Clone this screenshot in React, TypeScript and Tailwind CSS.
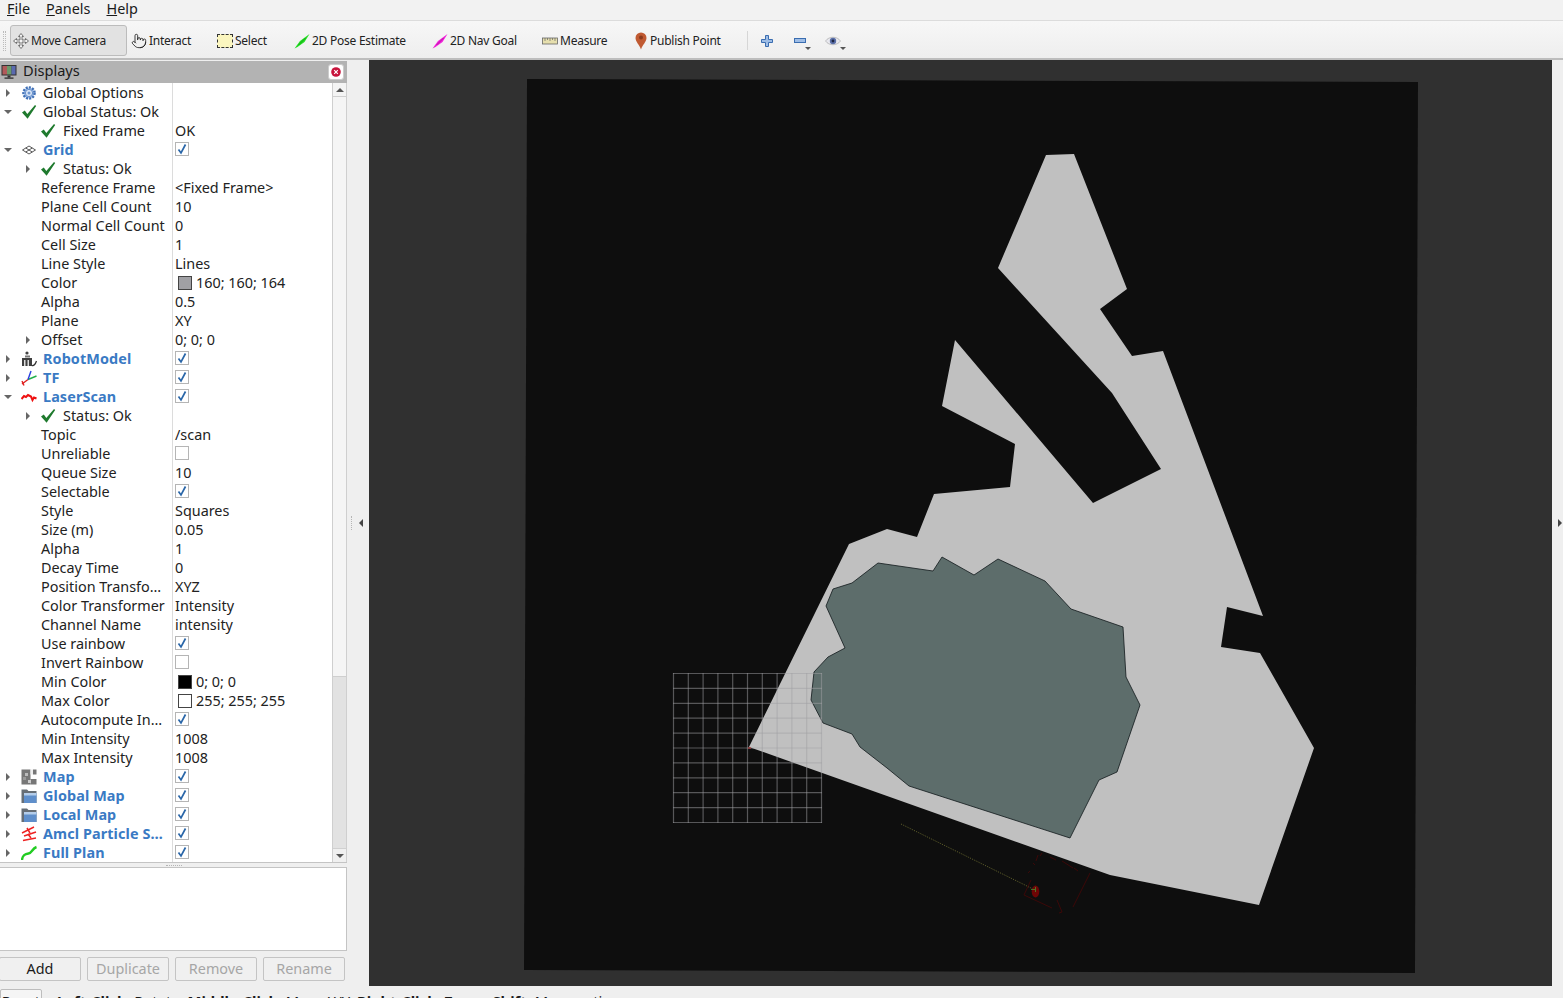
import { Pointer } from 'lucide-react';
import type { ReactNode } from 'react';

const Check = ({ className = 'w-4 h-4' }: { className?: string }) => (
  <svg viewBox="0 0 16 16" className={className}>
    <path d="M1 8.5 L3.8 6.5 L6.3 10 L14 1 L15.2 2 L6.6 14.8 Z" fill="#1f7a2e" />
  </svg>
);

const GearIcon = () => (
  <svg viewBox="0 0 16 16" className="w-4 h-4">
    <circle cx="8" cy="8" r="5.6" fill="#a9c4ea" stroke="#3f6fb5" strokeWidth="2.4" strokeDasharray="2 1.2" />
    <circle cx="8" cy="8" r="3.6" fill="#dbe7f7" stroke="#4c7cc0" strokeWidth="0.8" />
    <circle cx="8" cy="8" r="1.5" fill="#6f97d0" />
  </svg>
);

const GridIcon = () => (
  <svg viewBox="0 0 16 16" className="w-4 h-4" fill="none" stroke="#444" strokeWidth="0.9">
    <path d="M1.5 8 L8 4 L14.5 8 L8 12 Z" />
    <path d="M4.8 6 L11.2 10 M11.2 6 L4.8 10" />
  </svg>
);

const RobotIcon = () => (
  <svg viewBox="0 0 16 16" className="w-4 h-4">
    <circle cx="6" cy="2" r="1.6" fill="#444" />
    <rect x="4" y="4.5" width="5" height="2" fill="#777" />
    <rect x="1" y="7" width="10" height="8" fill="#3f3f3f" />
    <rect x="3" y="9" width="1.5" height="6" fill="#ddd" />
    <rect x="6.5" y="9" width="1.5" height="6" fill="#ddd" />
    <path d="M11 14.5 C13 15 14.5 13 15.5 10" stroke="#333" strokeWidth="1.3" fill="none" />
  </svg>
);

const TfIcon = () => (
  <svg viewBox="0 0 16 16" className="w-4 h-4" fill="none" strokeWidth="1.4">
    <path d="M7 9.5 L1 14" stroke="#e02020" />
    <path d="M1 11 L3 15.5" stroke="#e02020" />
    <path d="M7 9.5 L15.5 6" stroke="#22b04a" />
    <path d="M7 9.5 L10 1" stroke="#2a3fe0" />
  </svg>
);

const LaserIcon = () => (
  <svg viewBox="0 0 16 16" className="w-4 h-4" fill="none">
    <path d="M0.5 10 L3 7 L5 8 L7 6 L10 7.5 L11.5 11 L13 8.5 L15.5 9.5" stroke="#ee1111" strokeWidth="2" />
  </svg>
);

const MapIcon = () => (
  <svg viewBox="0 0 16 16" className="w-4 h-4">
    <rect x="0.5" y="0.5" width="9" height="15" fill="#777" />
    <rect x="4" y="4" width="3" height="3" fill="#bbb" />
    <rect x="2" y="8" width="3" height="3" fill="#999" />
    <rect x="9.5" y="0.5" width="2.5" height="5" fill="#eee" />
    <rect x="12" y="0.5" width="3.5" height="5" fill="#777" />
    <rect x="9.5" y="10" width="6" height="5.5" fill="#777" />
    <rect x="7" y="11" width="3" height="3" fill="#ccc" />
  </svg>
);

const FolderIcon = () => (
  <svg viewBox="0 0 16 16" className="w-4 h-4">
    <path d="M0.5 1.5 H6 L7.5 3 H15.5 V15 H0.5 Z" fill="#666e76" />
    <rect x="3" y="5" width="12.5" height="10" fill="#5f8fcb" />
    <rect x="3" y="5" width="12.5" height="2.5" fill="#b4cdea" />
  </svg>
);

const ParticleIcon = () => (
  <svg viewBox="0 0 16 16" className="w-4 h-4" fill="none" stroke="#ee2222" strokeWidth="1.5">
    <path d="M1 7 L13 1" />
    <path d="M3 10 L15 6" />
    <path d="M2 14.5 L15 12" />
    <path d="M6 2 L9 7 M7 8 L10 12" />
  </svg>
);

const PlanIcon = () => (
  <svg viewBox="0 0 16 16" className="w-4 h-4" fill="none">
    <path d="M1 15 C1.5 10 4 9 7.5 8.5 C11 8 11 3.5 15.5 2" stroke="#22cc22" strokeWidth="2.4" />
  </svg>
);

const Toggle = ({ on }: { on: boolean }) => (
  <span className="w-[14px] h-[14px] mb-[1px] bg-white border border-[#b5b5b5] flex items-center justify-center">
    {on && (
      <svg viewBox="0 0 12 12" className="w-[12px] h-[12px]" fill="none">
        <path d="M2.5 6.5 L5 10 L9.5 1.5" stroke="#2a66a8" strokeWidth="1.7" />
      </svg>
    )}
  </span>
);

type Row = {
  label: string;
  level: 'top' | 'status' | 'prop';
  open?: boolean;
  closed?: boolean;
  icon?: ReactNode;
  value?: string;
  check?: boolean;
  swatch?: string;
  blue?: boolean;
};

const rows: Row[] = [
  { label: 'Global Options', level: 'top', closed: true, icon: <GearIcon /> },
  { label: 'Global Status: Ok', level: 'top', open: true, icon: <Check /> },
  { label: 'Fixed Frame', level: 'status', icon: <Check />, value: 'OK' },
  { label: 'Grid', level: 'top', open: true, icon: <GridIcon />, check: true, blue: true },
  { label: 'Status: Ok', level: 'status', closed: true, icon: <Check /> },
  { label: 'Reference Frame', level: 'prop', value: '<Fixed Frame>' },
  { label: 'Plane Cell Count', level: 'prop', value: '10' },
  { label: 'Normal Cell Count', level: 'prop', value: '0' },
  { label: 'Cell Size', level: 'prop', value: '1' },
  { label: 'Line Style', level: 'prop', value: 'Lines' },
  { label: 'Color', level: 'prop', value: '160; 160; 164', swatch: 'bg-[#a0a0a4]' },
  { label: 'Alpha', level: 'prop', value: '0.5' },
  { label: 'Plane', level: 'prop', value: 'XY' },
  { label: 'Offset', level: 'prop', closed: true, value: '0; 0; 0' },
  { label: 'RobotModel', level: 'top', closed: true, icon: <RobotIcon />, check: true, blue: true },
  { label: 'TF', level: 'top', closed: true, icon: <TfIcon />, check: true, blue: true },
  { label: 'LaserScan', level: 'top', open: true, icon: <LaserIcon />, check: true, blue: true },
  { label: 'Status: Ok', level: 'status', closed: true, icon: <Check /> },
  { label: 'Topic', level: 'prop', value: '/scan' },
  { label: 'Unreliable', level: 'prop', check: false },
  { label: 'Queue Size', level: 'prop', value: '10' },
  { label: 'Selectable', level: 'prop', check: true },
  { label: 'Style', level: 'prop', value: 'Squares' },
  { label: 'Size (m)', level: 'prop', value: '0.05' },
  { label: 'Alpha', level: 'prop', value: '1' },
  { label: 'Decay Time', level: 'prop', value: '0' },
  { label: 'Position Transfo…', level: 'prop', value: 'XYZ' },
  { label: 'Color Transformer', level: 'prop', value: 'Intensity' },
  { label: 'Channel Name', level: 'prop', value: 'intensity' },
  { label: 'Use rainbow', level: 'prop', check: true },
  { label: 'Invert Rainbow', level: 'prop', check: false },
  { label: 'Min Color', level: 'prop', value: '0; 0; 0', swatch: 'bg-black' },
  { label: 'Max Color', level: 'prop', value: '255; 255; 255', swatch: 'bg-white' },
  { label: 'Autocompute In…', level: 'prop', check: true },
  { label: 'Min Intensity', level: 'prop', value: '1008' },
  { label: 'Max Intensity', level: 'prop', value: '1008' },
  { label: 'Map', level: 'top', closed: true, icon: <MapIcon />, check: true, blue: true },
  { label: 'Global Map', level: 'top', closed: true, icon: <FolderIcon />, check: true, blue: true },
  { label: 'Local Map', level: 'top', closed: true, icon: <FolderIcon />, check: true, blue: true },
  { label: 'Amcl Particle S…', level: 'top', closed: true, icon: <ParticleIcon />, check: true, blue: true },
  { label: 'Full Plan', level: 'top', closed: true, icon: <PlanIcon />, check: true, blue: true },
];

const Arrow = ({ open, closed }: { open?: boolean; closed?: boolean }) => (
  <span className="w-[10px] h-[10px] flex items-center justify-center shrink-0">
    {closed && <span className="border-y-[4px] border-y-transparent border-l-[4px] border-l-[#666]" />}
    {open && <span className="border-x-[4px] border-x-transparent border-t-[4px] border-t-[#666]" />}
  </span>
);

function TreeRow({ row }: { row: Row }) {
  return (
    <div className="flex h-[19px] items-center text-[14.4px] text-[#222]">
      <div className="w-[172px] shrink-0 flex items-center overflow-hidden whitespace-nowrap">
        {row.level === 'top' && (
          <>
            <span className="ml-[3px]">
              <Arrow open={row.open} closed={row.closed} />
            </span>
            <span className="ml-[8px] w-4 flex justify-center shrink-0">{row.icon}</span>
            <span className={`ml-[6px] ${row.blue ? 'font-bold text-[#3a7ac4] tracking-[0.1px]' : ''}`}>{row.label}</span>
          </>
        )}
        {row.level === 'status' && (
          <>
            <span className="ml-[23px]">
              <Arrow closed={row.closed} />
            </span>
            <span className="ml-[7px] w-4 flex justify-center shrink-0">{row.icon}</span>
            <span className="ml-[7px]">{row.label}</span>
          </>
        )}
        {row.level === 'prop' && (
          <>
            <span className="ml-[23px]">
              <Arrow closed={row.closed} />
            </span>
            <span className="ml-[8px]">{row.label}</span>
          </>
        )}
      </div>
      <div className="h-full flex-1 border-l border-[#dcdcdc] pl-[2px] flex items-center whitespace-nowrap">
        {row.check !== undefined && <Toggle on={row.check} />}
        {row.swatch && <span className={`w-[14px] h-[14px] ml-[3px] mr-[4px] border border-[#444] ${row.swatch}`} />}
        {row.value}
      </div>
    </div>
  );
}

const MoveIcon = () => (
  <svg viewBox="0 0 16 16" className="w-4 h-4" fill="#f4f4f4" stroke="#555" strokeWidth="0.8">
    <path d="M8 0.5 L10.5 3.5 H9 V7 H12.5 V5.5 L15.5 8 L12.5 10.5 V9 H9 V12.5 H10.5 L8 15.5 L5.5 12.5 H7 V9 H3.5 V10.5 L0.5 8 L3.5 5.5 V7 H7 V3.5 H5.5 Z" />
  </svg>
);

const SelectIcon = () => (
  <span className="w-[16px] h-[14px] bg-[#fbf6bf] border border-dashed border-[#333]" />
);

const PoseIcon = ({ color, dark }: { color: string; dark: string }) => (
  <svg viewBox="0 0 16 16" className="w-4 h-4">
    <path d="M0.5 15.5 L6 8 L15.5 1 L10.5 9 L3.5 14 Z" fill={color} />
    <path d="M4.5 12 L11.5 5" stroke={dark} strokeWidth="0.7" />
  </svg>
);

const MeasureIcon = () => (
  <svg viewBox="0 0 16 16" className="w-4 h-4">
    <rect x="0.5" y="5" width="15" height="6" fill="#e6dfae" stroke="#666" strokeWidth="0.8" />
    <path d="M3 5 V8 M5.5 5 V7 M8 5 V8 M10.5 5 V7 M13 5 V8" stroke="#666" strokeWidth="0.7" />
  </svg>
);

const PinIcon = () => (
  <svg viewBox="0 0 12 18" className="w-[12px] h-[18px]">
    <path d="M6 17.5 C4.5 13 0.5 9.5 0.5 6 A5.5 5.5 0 0 1 11.5 6 C11.5 9.5 7.5 13 6 17.5 Z" fill="#c05a32" />
    <circle cx="6" cy="5.5" r="2" fill="#8a3a1d" />
  </svg>
);

function Tool({
  label,
  icon,
  width,
  active,
  iconBox = 'w-4',
}: {
  label: string;
  icon: ReactNode;
  width: string;
  active?: boolean;
  iconBox?: string;
}) {
  return (
    <div
      className={`h-[31px] flex items-center gap-[2px] shrink-0 ${width} ${
        active ? 'pl-[2px] bg-[#e2e2e2] border border-[#bcbcbc] rounded-[3px]' : 'pl-[3px] border border-transparent'
      }`}
    >
      <span className={`${iconBox} flex justify-center shrink-0`}>{icon}</span>
      <span className="whitespace-nowrap tracking-[-0.25px]">{label}</span>
    </div>
  );
}

const DropMark = () => (
  <span className="absolute right-[-5px] bottom-[-3px] border-x-[3px] border-x-transparent border-t-[3px] border-t-[#555]" />
);

const light = '1046,155 1074,154 1127,289 1100,309 1132,356 1163,351 1263,616 1227,607 1221,647 1260,653 1314,748 1259,905 1110,875 749,747 849,544 887,529 917,537 934,494 1010,487 1015,444 942,406 955,340 1093,503 1161,469 1112,393 998,268';
const teal = '878,563 933,571 942,557 974,575 998,559 1045,581 1071,609 1123,627 1126,677 1140,705 1117,772 1099,780 1070,838 909,786 887,768 860,747 852,734 823,723 811,700 814,672 828,657 845,648 826,606 833,589 852,583';

function MapView() {
  const lines = Array.from({ length: 11 }, (_, i) => i);
  return (
    <svg viewBox="369 60 1183 926" className="w-full h-full block">
      <polygon points="527,79 1418,82 1415,973 524,970" fill="#0e0e0e" />
      <polygon points={light} fill="#c0c0c0" />
      <polygon points={teal} fill="#5d6d6b" stroke="#10181a" strokeWidth="0.8" />
      <g stroke="#a0a0a4" strokeOpacity="0.5" strokeWidth="1.2">
        {lines.map((i) => (
          <line key={`h${i}`} x1="673" x2="822" y1={673.5 + i * 14.9} y2={673.5 + i * 14.9} />
        ))}
        {lines.map((i) => (
          <line key={`v${i}`} y1="673" y2="823" x1={673.5 + i * 14.8} x2={673.5 + i * 14.8} />
        ))}
      </g>
      <path d="M748 748 h3" stroke="#d04040" strokeWidth="1" />
      <line x1="901" y1="824" x2="1033" y2="889" stroke="#6e6e30" strokeWidth="0.8" strokeDasharray="1.2 1.2" />
      <g fill="none" stroke="#3c0808" strokeWidth="1">
        <path d="M1090 873 L1073 907" />
        <path d="M1031 880 L1024 895 L1052 908" />
        <path d="M1057 900 L1062 912 L1059 913" />
        <path d="M1062 861 L1073 868 M1074 868 L1078 871 M1050 857 L1056 860 M1042 853 L1040 856" />
        <path d="M1038 855 L1036 861 M1033 863 L1035 865 M1030 871 L1028 873" />
      </g>
      <ellipse cx="1035.5" cy="891.5" rx="3.8" ry="6" fill="#6e0505" />
      <path d="M1035.5 887 V892 M1031 889.5 h4" stroke="#4c8c2c" strokeWidth="0.8" />
    </svg>
  );
}

const panelButton = 'h-[24px] w-[82px] border border-[#c4c4c4] rounded-[2px] bg-[#f0f0f0] flex items-center justify-center text-[14.4px]';

export default function App() {
  return (
    <div className="h-[998px] w-[1563px] overflow-hidden flex flex-col bg-[#efefef] text-[#1a1a1a] font-['Noto_Sans',sans-serif]">
      {/* menu bar */}
      <div className="h-[21px] shrink-0 flex items-center gap-[16px] pl-[7px] pb-[2px] text-[14.4px] border-b border-[#dcdcdc] bg-[#f2f2f2]">
        <span><span className="underline">F</span>ile</span>
        <span><span className="underline">P</span>anels</span>
        <span><span className="underline">H</span>elp</span>
      </div>

      {/* toolbar */}
      <div className="h-[39px] shrink-0 flex items-center pl-[2px] pt-[2px] text-[12px] text-[#222] bg-gradient-to-b from-[#f7f7f7] to-[#eeeeee] border-b-2 border-[#bdbdbd]">
        <div className="w-[3px] h-[20px] ml-[1px] mr-[4px] border-x border-dotted border-[#bbb]" />
        <Tool label="Move Camera" icon={<MoveIcon />} width="w-[117px]" active />
        <Tool label="Interact" icon={<Pointer size={16} strokeWidth={1.3} color="#222" />} width="w-[86px]" />
        <Tool label="Select" icon={<SelectIcon />} width="w-[77px]" />
        <Tool label="2D Pose Estimate" icon={<PoseIcon color="#22dd22" dark="#118811" />} width="w-[138px]" />
        <Tool label="2D Nav Goal" icon={<PoseIcon color="#f020d8" dark="#a01090" />} width="w-[110px]" />
        <Tool label="Measure" icon={<MeasureIcon />} width="w-[92px]" />
        <Tool label="Publish Point" icon={<PinIcon />} width="w-[113px]" iconBox="w-[14px]" />
        <div className="ml-[4px] w-px h-[19px] bg-[#d6d6d6]" />
        <svg viewBox="0 0 12 12" className="ml-[13px] w-[12px] h-[12px]">
          <path d="M4.5 0.5 H7.5 V4.5 H11.5 V7.5 H7.5 V11.5 H4.5 V7.5 H0.5 V4.5 H4.5 Z" fill="#9ebde6" stroke="#3a6db0" />
        </svg>
        <div className="relative ml-[21px] w-[12px] h-[12px] flex items-center">
          <span className="w-[12px] h-[5px] bg-[#9ebde6] border border-[#3a6db0]" />
          <DropMark />
        </div>
        <div className="relative ml-[19px] w-[16px] h-[12px]">
          <svg viewBox="0 0 16 12" className="w-4 h-3">
            <path d="M0.5 6 C4 1 12 1 15.5 6 C12 11 4 11 0.5 6 Z" fill="#e8e8ee" stroke="#aaa" strokeWidth="0.7" />
            <circle cx="8" cy="6" r="3.2" fill="#5a6fa8" />
            <circle cx="8" cy="6" r="1.4" fill="#1c2440" />
          </svg>
          <DropMark />
        </div>
      </div>

      {/* main area */}
      <div className="h-[926px] shrink-0 flex">
        <div className="w-[347px] shrink-0 flex flex-col">
          <div className="mt-[1px] h-[22px] shrink-0 bg-[#b3b3b3] flex items-center text-[14.6px] pl-[1px] pr-[3px]">
            <svg viewBox="0 0 16 16" className="w-4 h-4 shrink-0">
              <rect x="0.5" y="1" width="15" height="10.5" fill="#333" />
              <rect x="1.5" y="2" width="4.5" height="8.5" fill="#b05a5a" />
              <rect x="6" y="2" width="4.5" height="8.5" fill="#6a9a6a" />
              <rect x="10.5" y="2" width="4" height="8.5" fill="#5a6ab0" />
              <rect x="6.5" y="11.5" width="3" height="2" fill="#333" />
              <rect x="3.5" y="13.5" width="9" height="1.2" fill="#222" />
            </svg>
            <span className="ml-[6px] mb-[2px] flex-1">Displays</span>
            <span className="w-[16px] h-[16px] bg-white rounded-[3px] border border-[#ccc] flex items-center justify-center">
              <svg viewBox="0 0 10 10" className="w-[10px] h-[10px]">
                <circle cx="5" cy="5" r="4.8" fill="#c8143c" />
                <path d="M3.2 3.2 L6.8 6.8 M6.8 3.2 L3.2 6.8" stroke="#fff" strokeWidth="1.2" />
              </svg>
            </span>
          </div>

          <div className="h-[780px] shrink-0 flex bg-white border-b border-[#c4c4c4]">
            <div className="w-[332px] shrink-0">
              {rows.map((row, i) => (
                <TreeRow key={i} row={row} />
              ))}
            </div>
            <div className="flex-1 flex flex-col border-x border-[#cfcfcf] bg-[#e2e2e2]">
              <div className="h-[14px] bg-[#f4f4f4] border-b border-[#d0d0d0] flex items-center justify-center">
                <span className="border-x-[4px] border-x-transparent border-b-[4px] border-b-[#555]" />
              </div>
              <div className="h-[580px] bg-[#f5f5f5] border-b border-[#cfcfcf]" />
              <div className="flex-1" />
              <div className="h-[14px] bg-[#f0f0f0] border-t border-[#d0d0d0] flex items-center justify-center">
                <span className="border-x-[4px] border-x-transparent border-t-[4px] border-t-[#555]" />
              </div>
            </div>
          </div>

          <div className="h-[4px] shrink-0 flex items-center justify-center">
            <span className="w-[16px] border-t border-dotted border-[#b5b5b5]" />
          </div>
          <div className="h-[84px] shrink-0 bg-white border border-[#c4c4c4] border-l-0" />
          <div className="mt-[6px] flex gap-[6px] -ml-px">
            <div className={panelButton}>Add</div>
            <div className={`${panelButton} text-[#a6a6a6]`}>Duplicate</div>
            <div className={`${panelButton} text-[#a6a6a6]`}>Remove</div>
            <div className={`${panelButton} text-[#a6a6a6]`}>Rename</div>
          </div>
        </div>

        <div className="w-[22px] shrink-0 flex items-center">
          <span className="ml-[4px] h-[14px] border-l border-dotted border-[#b5b5b5]" />
          <span className="ml-[7px] border-y-[4px] border-y-transparent border-r-[4px] border-r-[#444]" />
        </div>

        <div className="w-[1183px] shrink-0 bg-[#303030]">
          <MapView />
        </div>

        <div className="flex-1 flex items-center justify-end pr-[1px]">
          <span className="border-y-[4px] border-y-transparent border-l-[4px] border-l-[#444]" />
        </div>
      </div>

      {/* status line, cut off by the window edge */}
      <div className="flex-1 overflow-hidden flex items-start text-[14.8px] whitespace-nowrap">
        <div className="mt-[3px] w-[42px] h-[24px] shrink-0 bg-[#f5f5f5] border border-[#bdbdbd] rounded-[2px] text-center">Reset</div>
        <div className="ml-[15px] mt-[5px] leading-[20px]">
          <b>Left-Click:</b> Rotate. <b>Middle-Click:</b> Move X/Y. <b>Right-Click:</b> Zoom. <b>Shift:</b> More options.
        </div>
      </div>
    </div>
  );
}
